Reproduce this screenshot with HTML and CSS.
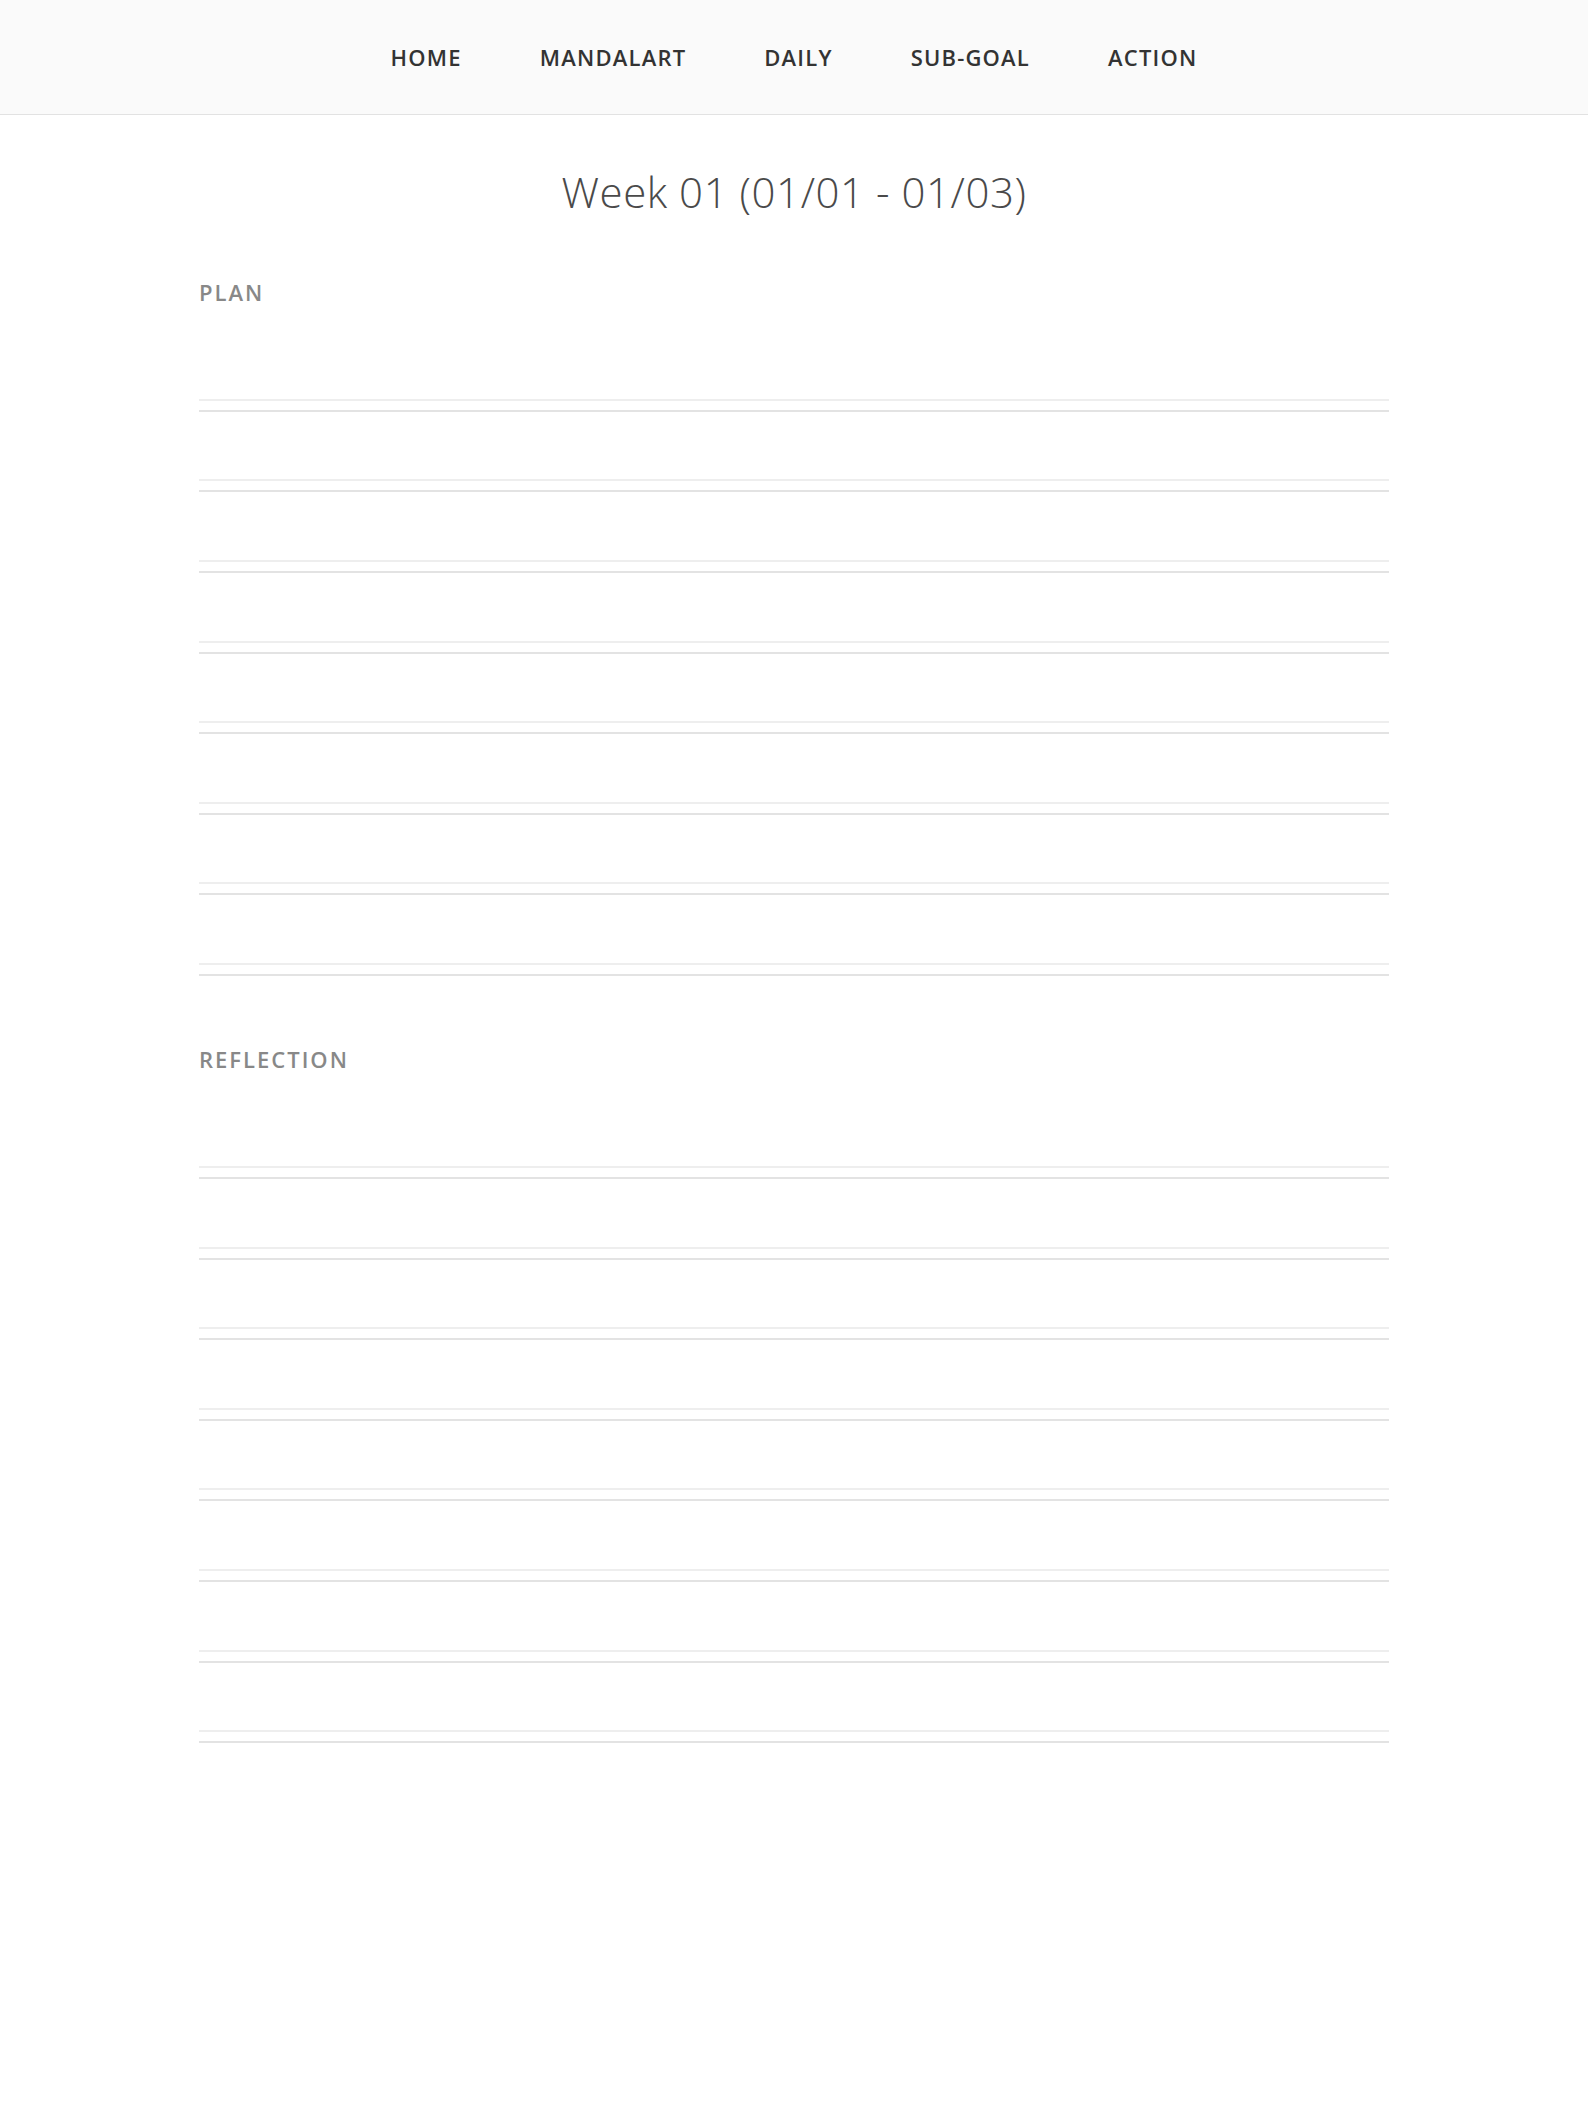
FILE: index.html
```html
<!DOCTYPE html>
<html lang="en">
<head>
<meta charset="utf-8">
<title>Week 01</title>
<link rel="stylesheet" href="styles.css">
</head>
<body>
<nav class="topnav">
  <ul class="menu">
    <li><a href="#">HOME</a></li>
    <li><a href="#">MANDALART</a></li>
    <li><a href="#">DAILY</a></li>
    <li><a href="#">SUB-GOAL</a></li>
    <li><a href="#">ACTION</a></li>
  </ul>
</nav>
<main class="page">
  <h1 class="title">Week 01 (01/01 - 01/03)</h1>
  <section class="block">
    <h2 class="label">PLAN</h2>
    <div class="rows">
      <div class="row"></div><div class="row"></div><div class="row"></div><div class="row"></div>
      <div class="row"></div><div class="row"></div><div class="row"></div><div class="row"></div>
    </div>
  </section>
  <section class="block second">
    <h2 class="label">REFLECTION</h2>
    <div class="rows">
      <div class="row"></div><div class="row"></div><div class="row"></div><div class="row"></div>
      <div class="row"></div><div class="row"></div><div class="row"></div><div class="row"></div>
    </div>
  </section>
</main>
</body>
</html>
```

FILE: styles.css
```css
html, body {
  margin: 0;
  padding: 0;
  background: #ffffff;
  font-family: "Open Sans", "Noto Sans", sans-serif;
}

.topnav {
  height: 114px;
  background: #fafafa;
  border-bottom: 1px solid #e2e2e2;
  display: flex;
  align-items: center;
  justify-content: center;
}

.menu {
  list-style: none;
  margin: 0;
  padding: 0;
  display: flex;
  gap: 78px;
}

.menu a {
  color: #333333;
  text-decoration: none;
  font-size: 22px;
  font-weight: 600;
  letter-spacing: 1.2px;
  line-height: 1.2;
}

.page {
  width: 1190px;
  margin: 0 auto;
  padding-bottom: 300px;
}

.title {
  margin: 51.5px 0 0;
  text-align: center;
  font-size: 42px;
  font-weight: 300;
  line-height: 1.2;
  color: #4a4a4a;
  letter-spacing: 0.55px;
}

.block {
  margin-top: 62px;
}

.block.second {
  margin-top: 70px;
}

.label {
  margin: 0;
  font-size: 22px;
  font-weight: 600;
  line-height: 1.2;
  letter-spacing: 2px;
  color: #888888;
}

.rows {
  margin-top: 26px;
  display: flex;
  flex-direction: column;
}

.row {
  box-sizing: border-box;
  height: 80.6px;
  border-bottom: 2px solid #e3e3e3;
  background: linear-gradient(#eeeeee, #eeeeee) left bottom 9px / 100% 2px no-repeat;
}
```
